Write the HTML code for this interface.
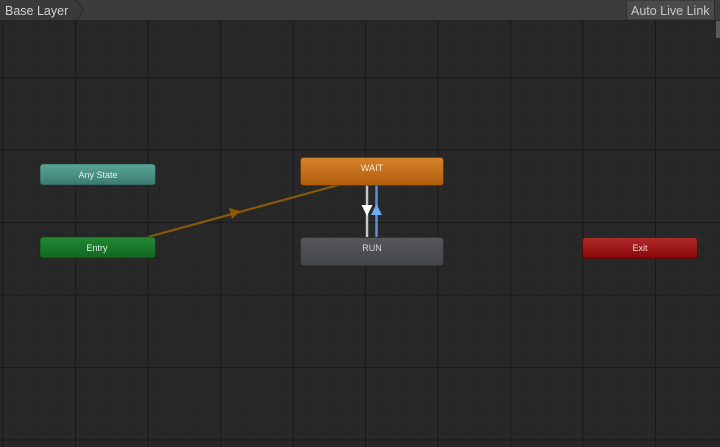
<!DOCTYPE html>
<html><head><style>
html,body{margin:0;padding:0;width:720px;height:447px;overflow:hidden;background:#282828;font-family:"Liberation Sans",sans-serif}
</style></head><body>
<svg width="720" height="447" xmlns="http://www.w3.org/2000/svg" style="position:absolute;left:0;top:0">
<defs>
<pattern id="g" x="2.5" y="4.5" width="72.5" height="72.5" patternUnits="userSpaceOnUse">
<g stroke="#242424" stroke-width="1">
<line x1="12.08" y1="0" x2="12.08" y2="72.5"/><line x1="24.17" y1="0" x2="24.17" y2="72.5"/><line x1="36.25" y1="0" x2="36.25" y2="72.5"/><line x1="48.33" y1="0" x2="48.33" y2="72.5"/><line x1="60.42" y1="0" x2="60.42" y2="72.5"/>
<line y1="12.08" x1="0" y2="12.08" x2="72.5"/><line y1="24.17" x1="0" y2="24.17" x2="72.5"/><line y1="36.25" x1="0" y2="36.25" x2="72.5"/><line y1="48.33" x1="0" y2="48.33" x2="72.5"/><line y1="60.42" x1="0" y2="60.42" x2="72.5"/>
</g>
<g stroke="#1a1a1a" stroke-width="1.2"><line x1="0.5" y1="0" x2="0.5" y2="72.5"/><line y1="0.5" x1="0" y2="0.5" x2="72.5"/></g>
</pattern>
<linearGradient id="any" x1="0" y1="0" x2="0" y2="1"><stop offset="0" stop-color="#5aa596"/><stop offset="1" stop-color="#3b7a70"/></linearGradient>
<linearGradient id="ent" x1="0" y1="0" x2="0" y2="1"><stop offset="0" stop-color="#1f8a36"/><stop offset="1" stop-color="#13661f"/></linearGradient>
<linearGradient id="wait" x1="0" y1="0" x2="0" y2="1"><stop offset="0" stop-color="#d7822a"/><stop offset="1" stop-color="#b05c0e"/></linearGradient>
<linearGradient id="run" x1="0" y1="0" x2="0" y2="1"><stop offset="0" stop-color="#55575b"/><stop offset="1" stop-color="#45474a"/></linearGradient>
<linearGradient id="exit" x1="0" y1="0" x2="0" y2="1"><stop offset="0" stop-color="#b02a2a"/><stop offset="1" stop-color="#8a0707"/></linearGradient>
</defs>
<rect x="0" y="21" width="720" height="426" fill="#282828"/>
<rect x="0" y="21" width="720" height="426" fill="url(#g)"/>
<!-- transitions -->
<line x1="148" y1="237" x2="342" y2="184" stroke="#8a5a08" stroke-width="2.2"/>
<polygon points="240,211 229,208 232,219" fill="#8a5a08"/>
<line x1="367" y1="185" x2="367" y2="237" stroke="#c8c8c8" stroke-width="2.5"/>
<polygon points="361.5,205 372.5,205 367,216" fill="#fff"/>
<line x1="376.5" y1="185" x2="376.5" y2="237" stroke="#5a8ed8" stroke-width="2.5"/>
<polygon points="371,215 382,215 376.5,204" fill="#6aacf5"/>
<!-- nodes -->
<rect x="40" y="164" width="115.5" height="21" rx="3" fill="url(#any)" stroke="#1e3a36" stroke-width="0.6"/>
<text x="98" y="178" fill="#e6f0ee" font-size="9" text-anchor="middle" font-family="Liberation Sans">Any State</text>
<rect x="40" y="237" width="115.5" height="21" rx="3" fill="url(#ent)" stroke="#0a3a12" stroke-width="0.6"/>
<text x="97" y="251" fill="#e6f0e6" font-size="9" text-anchor="middle" font-family="Liberation Sans">Entry</text>
<rect x="300.5" y="157.5" width="143" height="28" rx="3" fill="url(#wait)" stroke="#5a3000" stroke-width="0.6"/>
<text x="372" y="171" fill="#fbe8d6" font-size="9" text-anchor="middle" font-family="Liberation Sans">WAIT</text>
<rect x="300.5" y="237.5" width="143" height="28" rx="3" fill="url(#run)" stroke="#2a2a2a" stroke-width="0.6"/>
<text x="372" y="251" fill="#d8d8d8" font-size="9" text-anchor="middle" font-family="Liberation Sans">RUN</text>
<rect x="582.5" y="237.5" width="115" height="21" rx="3" fill="url(#exit)" stroke="#4a0000" stroke-width="0.6"/>
<text x="640" y="251" fill="#f2dada" font-size="9" text-anchor="middle" font-family="Liberation Sans">Exit</text>
<!-- toolbar -->
<rect x="0" y="0" width="720" height="21" fill="#3c3c3c"/>
<rect x="0" y="20" width="720" height="1" fill="#232323"/>
<polygon points="0,0 76,0 84,10 76,20 0,20" fill="#3a3a3a"/>
<polyline points="76,0 84,10 76,20" fill="none" stroke="#2a2a2a" stroke-width="1"/>
<text x="5" y="15" fill="#d2d2d2" font-size="12.5" font-family="Liberation Sans">Base Layer</text>
<rect x="626.5" y="0" width="88" height="20" fill="#4a4a4a" stroke="#2e2e2e" stroke-width="1"/>
<text x="631" y="15" fill="#c8c8c8" font-size="12.5" font-family="Liberation Sans">Auto Live Link</text>
<rect x="716" y="21" width="4" height="17" fill="#5a5a5a"/>
</svg>
</body></html>
